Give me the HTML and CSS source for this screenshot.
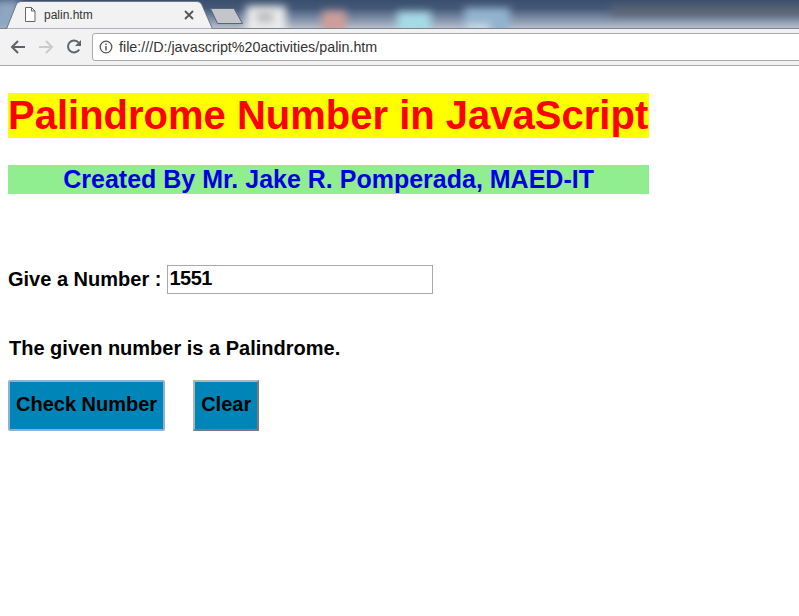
FILE: index.html
```html
<!DOCTYPE html>
<html lang="en">
<head>
<meta charset="utf-8">
<title>palin.htm</title>
<link rel="stylesheet" href="styles.css">
</head>
<body>
<header class="chrome">
  <div class="tabstrip">
    <div class="wallpaper">
      <span class="blob blob-corner"></span>
      <span class="blob blob-white"></span>
      <span class="blob blob-grey"></span>
      <span class="blob blob-red"></span>
      <span class="blob blob-cyan"></span>
      <span class="blob blob-blue"></span>
      <span class="blob blob-glow"></span>
      <span class="blob blob-caption"></span>
    </div>
    <svg class="tabshape" width="250" height="29" viewBox="0 0 250 29">
      <path d="M6.5 29 L16.5 4 Q18 1.5 21 1.5 L197 1.5 Q200 1.5 201.5 4 L212.5 29 Z" fill="#f2f2f2" stroke="#6f7784" stroke-width="1"/>
      <path d="M210.5 8.5 L234 8.5 L242.5 23.5 L217.5 23.5 Z" fill="#c3c5cb" stroke="#55667c" stroke-width="1"/>
    </svg>
    <svg class="fileicon" width="12" height="15" viewBox="0 0 12 15">
      <path d="M1.5 .5 H7.5 L11 4 V14.5 H1.5 Z M7.5 .5 V4 H11" fill="#fff" stroke="#666" stroke-width="1"/>
    </svg>
    <span class="tabtitle">palin.htm</span>
    <svg class="tabclose" width="10" height="10" viewBox="0 0 10 10">
      <path d="M1 1 L9 9 M9 1 L1 9" stroke="#555" stroke-width="1.8"/>
    </svg>
  </div>
  <div class="toolbar">
    <svg class="navicon" width="16" height="14" viewBox="0 0 16 14">
      <path d="M15 7 H2.5 M8 1 L2 7 L8 13" fill="none" stroke="#5f6368" stroke-width="2"/>
    </svg>
    <svg class="navicon" width="16" height="14" viewBox="0 0 16 14">
      <path d="M1 7 H13.5 M8 1 L14 7 L8 13" fill="none" stroke="#c9cbcd" stroke-width="2"/>
    </svg>
    <svg class="navicon" width="16" height="16" viewBox="0 0 16 16">
      <path d="M13.2 10.5 A6 6 0 1 1 12.6 3.6" fill="none" stroke="#5f6368" stroke-width="2"/>
      <path d="M15 1 V7 H9 Z" fill="#5f6368"/>
    </svg>
    <div class="omnibox">
      <svg class="infoicon" width="14" height="14" viewBox="0 0 14 14">
        <circle cx="7" cy="7" r="5.8" fill="none" stroke="#555" stroke-width="1.3"/>
        <path d="M7 6 V10.5 M7 3.4 V5" stroke="#555" stroke-width="1.5"/>
      </svg>
      <span class="url">file:///D:/javascript%20activities/palin.htm</span>
    </div>
  </div>
</header>
<main class="page">
  <div class="titles">
    <h1 class="title">Palindrome Number in JavaScript</h1>
    <h2 class="subtitle">Created By Mr. Jake R. Pomperada, MAED-IT</h2>
  </div>
  <div class="field">
    <label class="label" for="num">Give a Number :</label>
    <input class="input" id="num" type="text" value="1551">
  </div>
  <p class="result">The given number is a Palindrome.</p>
  <div class="actions">
    <button class="btn btn-focus" type="button">Check Number</button>
    <button class="btn" type="button">Clear</button>
  </div>
</main>
</body>
</html>
```
FILE: styles.css
```css
* { box-sizing: border-box; }
html, body { margin: 0; padding: 0; background: #fff; }
body { height: 616px; overflow: hidden; font-family: "Liberation Sans", Arial, sans-serif; }

.chrome { display: flex; flex-direction: column; height: 66px; border-bottom: 1px solid #a9a9a9; }
.tabstrip {
  position: relative; display: flex; align-items: center; height: 29px; flex: none; padding: 1px 0 0 24px;
  border-bottom: 1px solid #7d8490;
  background: linear-gradient(#3a4f6d 0, #44587a 30%, #7f90a8 68%, #b7bdcb 100%);
}
.wallpaper { position: absolute; inset: 0; overflow: hidden; }
.blob { position: absolute; display: block; filter: blur(4px); }
.blob-corner { left: -6px; top: 0; width: 26px; height: 30px; background: #8fa6c3; }
.blob-white { left: 246px; top: 6px; width: 40px; height: 28px; background: #eceded; }
.blob-grey { left: 257px; top: 12px; width: 16px; height: 10px; background: #b5b5b7; }
.blob-red { left: 322px; top: 11px; width: 24px; height: 22px; background: #cf9c98; }
.blob-cyan { left: 397px; top: 12px; width: 34px; height: 22px; background: #a6dbe6; }
.blob-blue { left: 464px; top: 8px; width: 46px; height: 24px; background: #92b3cf; }
.blob-glow { left: 466px; top: 25px; width: 24px; height: 6px; background: #eef0f0; }
.blob-caption { left: 610px; top: 7px; width: 200px; height: 8px; background: #5f6570; }
.tabshape { position: absolute; left: 0; top: 0; }
.fileicon { position: relative; flex: none; }
.tabtitle { position: relative; margin-left: 8px; width: 130px; font-size: 12px; color: #333; }
.tabclose { position: relative; flex: none; margin-left: 10px; }

.toolbar { display: flex; align-items: center; gap: 12px; flex: 1; padding: 0 0 0 10px; background: #f2f2f2; }
.navicon { flex: none; }
.omnibox {
  display: flex; align-items: center; gap: 6px; flex: 1; height: 28px; margin-left: -2px; margin-right: -4px; padding-left: 6px;
  background: #fff; border: 1px solid #a9a9a9; border-radius: 3px;
}
.infoicon { flex: none; }
.url { font-size: 14.3px; color: #333; white-space: nowrap; }

.page { padding: 27px 0 0 8px; }
.titles { display: inline-flex; flex-direction: column; }
.title {
  margin: 0; height: 45px; line-height: 45px; padding: 0 1px 0 0;
  font-size: 40px; font-weight: bold; color: #f00; background: #ff0; white-space: nowrap;
}
.subtitle {
  margin: 27px 0 0; height: 29px; line-height: 29px;
  font-size: 25px; font-weight: bold; color: #0000e0; background: #90ee90; text-align: center; white-space: nowrap;
}
.field { display: flex; align-items: center; gap: 6px; margin-top: 71px; }
.label { font-size: 20px; font-weight: bold; color: #000; }
.input {
  width: 266px; height: 29px; padding: 0 1px 2px; border: 1px solid #a9a9a9; background: #fff;
  font-family: inherit; font-size: 20px; letter-spacing: -0.5px; font-weight: bold; color: #000; outline: none;
}
.result { margin: 43px 0 0 1px; height: 23px; line-height: 23px; font-size: 20px; font-weight: bold; color: #000; }
.actions { display: flex; gap: 28px; margin-top: 20px; }
.btn {
  height: 51px; padding: 0 6px 2px; font-family: inherit; font-size: 20px; font-weight: bold; color: #000;
  background: #0085b8; border: 2px solid; border-color: #b4b4b4 #7b7b7b #7b7b7b #b4b4b4;
}
.btn-focus { border-color: #8fb0d8; border-radius: 2px; }
```
